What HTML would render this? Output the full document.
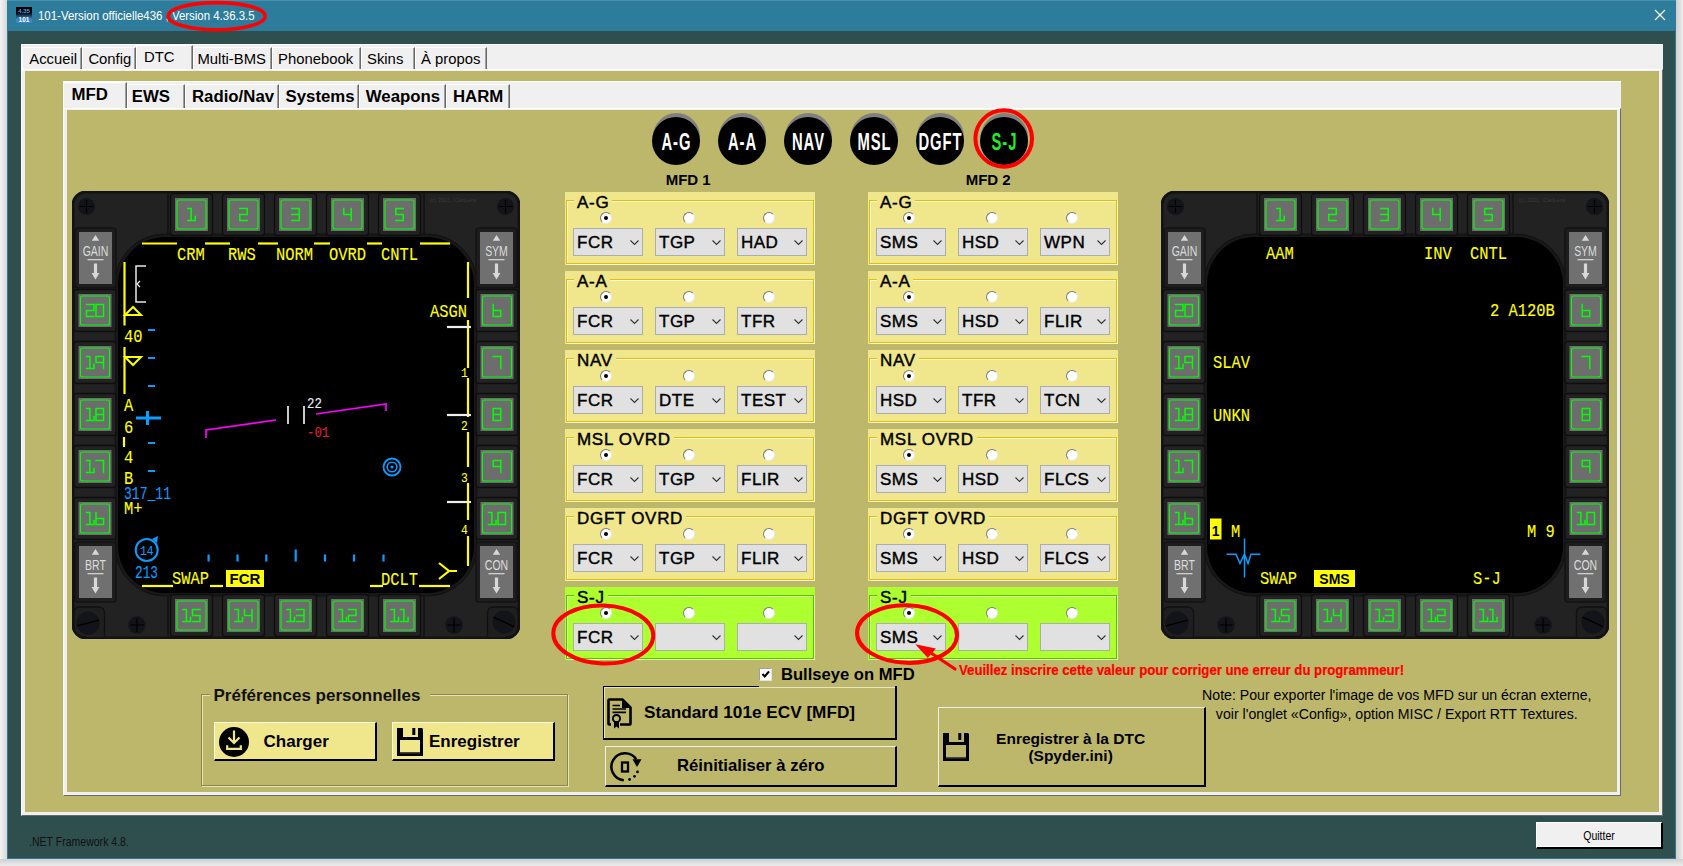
<!DOCTYPE html>
<html><head><meta charset="utf-8">
<style>
*{box-sizing:border-box}
html,body{margin:0;padding:0}
body{width:1683px;height:866px;overflow:hidden;position:relative;background:#e6e6e6;font-family:"Liberation Sans",sans-serif;color:#000}
.abs{position:absolute}
.gb{position:absolute;width:250px;height:73px}
.gbl{position:absolute;left:1px;top:8px;width:248px;height:64px;border:1px solid #e0c000;box-shadow:inset 1px 1px 0 rgba(255,255,255,.6),1px 1px 0 rgba(255,255,255,.6)}
.gbt{position:absolute;left:9px;top:2px;padding:0 3px;font-size:17px;line-height:18px;color:#000;white-space:nowrap;letter-spacing:0.7px;-webkit-text-stroke:0.45px #000}
.radio{position:absolute;width:12px;height:12px;border-radius:50%;background:#fff;border:1px solid #e8e8e8;border-top-color:#7a7a7a;border-left-color:#7a7a7a}
.radio.sel::after{content:"";position:absolute;left:3px;top:3px;width:4px;height:4px;border-radius:50%;background:#000}
.combo{position:absolute;width:70px;height:28px;background:#e1e1e1;border:1px solid #adadad;font-size:17px;color:#000}
.combo span{position:absolute;left:3px;top:5px;line-height:18px;letter-spacing:0.5px;-webkit-text-stroke:0.4px #000}
.chev{position:absolute;right:3px;top:11px}
.rb{position:absolute;width:48px;height:52px}
.rbs{position:absolute;left:1px;top:0;width:47px;height:47px;border-radius:50%;background:#808080}
.rbc{position:absolute;left:0;top:4px;width:48px;height:48px;border-radius:50%;background:#000}
.rbt{position:absolute;left:-26px;width:100px;top:17px;text-align:center;font-weight:bold;font-size:23.5px;line-height:24px;transform:scaleX(0.63);letter-spacing:1.5px;text-indent:1.5px}
.btn{position:absolute;background:#f0e68c;border-top:1px solid #fffbe0;border-left:1px solid #fffbe0;border-right:2px solid #000;border-bottom:2px solid #000}
.btn2{position:absolute;background:#bdb76b;border-top:1px solid #eee;border-left:1px solid #eee;border-right:2px solid #000;border-bottom:2px solid #000}
</style></head><body>
<div class="abs" style="left:0;top:0;width:7px;height:866px;background:linear-gradient(90deg,#f4f4f4,#d8d8d8)"></div>
<div class="abs" style="left:1676px;top:0;width:7px;height:866px;background:linear-gradient(90deg,#cfcfcf,#ececec)"></div>
<div class="abs" style="left:0;top:859px;width:1683px;height:7px;background:linear-gradient(#d0d0d0,#ececec)"></div>
<div class="abs" style="left:7px;top:0;width:1669px;height:859px;background:#2e7c9c"></div>
<div class="abs" style="left:7px;top:0;width:1669px;height:1px;background:#4a8fab"></div>
<div class="abs" style="left:8px;top:31px;width:1667px;height:827px;background:#2f4f4f"></div>
<svg class="abs" style="left:16px;top:7px" width="16" height="16"><defs><linearGradient id="ig" x1="0" y1="0" x2="0" y2="1"><stop offset="0" stop-color="#000"/><stop offset="0.35" stop-color="#000"/><stop offset="0.75" stop-color="#3a86c8"/><stop offset="1" stop-color="#3a86c8"/></defs><rect width="16" height="16" fill="url(#ig)"/><text x="8" y="6" font-family="Liberation Sans" font-weight="bold" font-size="6" fill="#4a9ee0" text-anchor="middle">4.35</text><text x="8" y="15" font-family="Liberation Sans" font-weight="bold" font-size="6.5" fill="#fff" text-anchor="middle">101</text></svg>
<div class="abs" style="left:38px;top:9.16px;font-size:12.3px;line-height:14.76px;color:#fff;white-space:nowrap;transform:scaleX(0.93);transform-origin:0 0;">101-Version officielle436 , Version 4.36.3.5</div>
<svg class="abs" style="left:1654px;top:9px" width="12" height="12"><path d="M1 1L11 11M11 1L1 11" stroke="#fff" stroke-width="1.2"/></svg>
<div class="abs" style="left:21px;top:44px;width:1642px;height:26px;background:#f0f0f0;border-top:1px solid #fff;border-left:1px solid #fff"></div><div class="abs" style="left:21px;top:69px;width:1642px;height:747px;background:#f0f0f0;border-top:1px solid #fff;border-left:1px solid #fff;border-right:1px solid #696969;border-bottom:1px solid #696969"></div><div class="abs" style="left:25px;top:71px;width:1634px;height:741px;background:#bdb76b"></div><div class="abs" style="left:22px;top:47px;width:60px;height:22px;background:#f0f0f0;border-top:1px solid #fff;border-left:1px solid #fff;border-right:1px solid #696969;box-shadow:inset -1px 0 0 #a0a0a0"></div><div class="abs" style="left:29.3px;top:50.74px;font-size:14.85px;line-height:17.82px;color:#000;white-space:nowrap;">Accueil</div><div class="abs" style="left:82px;top:47px;width:54px;height:22px;background:#f0f0f0;border-top:1px solid #fff;border-left:1px solid #fff;border-right:1px solid #696969;box-shadow:inset -1px 0 0 #a0a0a0"></div><div class="abs" style="left:88.4px;top:50.74px;font-size:14.85px;line-height:17.82px;color:#000;white-space:nowrap;">Config</div><div class="abs" style="left:136px;top:45px;width:57px;height:24px;background:#f0f0f0;border-top:1px solid #fff;border-left:1px solid #fff;border-right:1px solid #696969;box-shadow:inset -1px 0 0 #a0a0a0"></div><div class="abs" style="left:144px;top:49.14px;font-size:14.85px;line-height:17.82px;color:#000;white-space:nowrap;">DTC</div><div class="abs" style="left:193px;top:47px;width:79px;height:22px;background:#f0f0f0;border-top:1px solid #fff;border-left:1px solid #fff;border-right:1px solid #696969;box-shadow:inset -1px 0 0 #a0a0a0"></div><div class="abs" style="left:197.5px;top:50.74px;font-size:14.85px;line-height:17.82px;color:#000;white-space:nowrap;">Multi-BMS</div><div class="abs" style="left:272px;top:47px;width:89px;height:22px;background:#f0f0f0;border-top:1px solid #fff;border-left:1px solid #fff;border-right:1px solid #696969;box-shadow:inset -1px 0 0 #a0a0a0"></div><div class="abs" style="left:278px;top:50.74px;font-size:14.85px;line-height:17.82px;color:#000;white-space:nowrap;">Phonebook</div><div class="abs" style="left:361px;top:47px;width:54px;height:22px;background:#f0f0f0;border-top:1px solid #fff;border-left:1px solid #fff;border-right:1px solid #696969;box-shadow:inset -1px 0 0 #a0a0a0"></div><div class="abs" style="left:367px;top:50.74px;font-size:14.85px;line-height:17.82px;color:#000;white-space:nowrap;">Skins</div><div class="abs" style="left:415px;top:47px;width:72px;height:22px;background:#f0f0f0;border-top:1px solid #fff;border-left:1px solid #fff;border-right:1px solid #696969;box-shadow:inset -1px 0 0 #a0a0a0"></div><div class="abs" style="left:421px;top:50.74px;font-size:14.85px;line-height:17.82px;color:#000;white-space:nowrap;">À propos</div>
<div class="abs" style="left:63px;top:81px;width:1558px;height:28px;background:#f0f0f0;border-top:1px solid #fff;border-left:1px solid #fff"></div><div class="abs" style="left:63px;top:108px;width:1558px;height:688px;background:#f0f0f0;border-top:1px solid #fff;border-left:1px solid #fff;border-right:1px solid #696969;border-bottom:1px solid #696969"></div><div class="abs" style="left:67px;top:110px;width:1550px;height:682px;background:#bdb76b"></div><div class="abs" style="left:63px;top:82px;width:64px;height:26px;background:#f0f0f0;border-top:1px solid #fff;border-left:1px solid #fff;border-right:1px solid #696969;box-shadow:inset -1px 0 0 #a0a0a0"></div><div class="abs" style="left:71.6px;top:84.70px;font-size:16.8px;line-height:20.16px;color:#000;white-space:nowrap;font-weight:bold;">MFD</div><div class="abs" style="left:127px;top:84px;width:58px;height:24px;background:#f0f0f0;border-top:1px solid #fff;border-left:1px solid #fff;border-right:1px solid #696969;box-shadow:inset -1px 0 0 #a0a0a0"></div><div class="abs" style="left:131.8px;top:86.60px;font-size:16.8px;line-height:20.16px;color:#000;white-space:nowrap;font-weight:bold;">EWS</div><div class="abs" style="left:185px;top:84px;width:94px;height:24px;background:#f0f0f0;border-top:1px solid #fff;border-left:1px solid #fff;border-right:1px solid #696969;box-shadow:inset -1px 0 0 #a0a0a0"></div><div class="abs" style="left:192px;top:86.60px;font-size:16.8px;line-height:20.16px;color:#000;white-space:nowrap;font-weight:bold;">Radio/Nav</div><div class="abs" style="left:279px;top:84px;width:80px;height:24px;background:#f0f0f0;border-top:1px solid #fff;border-left:1px solid #fff;border-right:1px solid #696969;box-shadow:inset -1px 0 0 #a0a0a0"></div><div class="abs" style="left:285.6px;top:86.60px;font-size:16.8px;line-height:20.16px;color:#000;white-space:nowrap;font-weight:bold;">Systems</div><div class="abs" style="left:359px;top:84px;width:87px;height:24px;background:#f0f0f0;border-top:1px solid #fff;border-left:1px solid #fff;border-right:1px solid #696969;box-shadow:inset -1px 0 0 #a0a0a0"></div><div class="abs" style="left:365.8px;top:86.60px;font-size:16.8px;line-height:20.16px;color:#000;white-space:nowrap;font-weight:bold;">Weapons</div><div class="abs" style="left:446px;top:84px;width:64px;height:24px;background:#f0f0f0;border-top:1px solid #fff;border-left:1px solid #fff;border-right:1px solid #696969;box-shadow:inset -1px 0 0 #a0a0a0"></div><div class="abs" style="left:453px;top:86.60px;font-size:16.8px;line-height:20.16px;color:#000;white-space:nowrap;font-weight:bold;">HARM</div>
<div class="rb" style="left:652px;top:113px"><div class="rbs"></div><div class="rbc"></div><div class="rbt" style="color:#fff">A-G</div></div><div class="rb" style="left:718px;top:113px"><div class="rbs"></div><div class="rbc"></div><div class="rbt" style="color:#fff">A-A</div></div><div class="rb" style="left:783.5px;top:113px"><div class="rbs"></div><div class="rbc"></div><div class="rbt" style="color:#fff">NAV</div></div><div class="rb" style="left:850px;top:113px"><div class="rbs"></div><div class="rbc"></div><div class="rbt" style="color:#fff">MSL</div></div><div class="rb" style="left:916px;top:113px"><div class="rbs"></div><div class="rbc"></div><div class="rbt" style="color:#fff">DGFT</div></div><div class="rb" style="left:979.7px;top:113px"><div class="rbs"></div><div class="rbc"></div><div class="rbt" style="color:#22ee22">S-J</div></div>
<div class="gb" style="left:565px;top:192px;background:#f0e68c"><div class="gbl" style="border-color:#e0c000"></div><div class="gbt" style="background:#f0e68c">A-G</div><div class="radio sel" style="left:35px;top:20px"></div><div class="combo" style="left:8px;top:36px"><span>FCR</span><svg class="chev" width="9" height="6" viewBox="0 0 9 6"><path d="M0.5 0.5L4.5 4.5L8.5 0.5" stroke="#333" stroke-width="1.1" fill="none"/></svg></div><div class="radio" style="left:118px;top:20px"></div><div class="combo" style="left:90px;top:36px"><span>TGP</span><svg class="chev" width="9" height="6" viewBox="0 0 9 6"><path d="M0.5 0.5L4.5 4.5L8.5 0.5" stroke="#333" stroke-width="1.1" fill="none"/></svg></div><div class="radio" style="left:198px;top:20px"></div><div class="combo" style="left:172px;top:36px"><span>HAD</span><svg class="chev" width="9" height="6" viewBox="0 0 9 6"><path d="M0.5 0.5L4.5 4.5L8.5 0.5" stroke="#333" stroke-width="1.1" fill="none"/></svg></div></div><div class="gb" style="left:565px;top:271px;background:#f0e68c"><div class="gbl" style="border-color:#e0c000"></div><div class="gbt" style="background:#f0e68c">A-A</div><div class="radio sel" style="left:35px;top:20px"></div><div class="combo" style="left:8px;top:36px"><span>FCR</span><svg class="chev" width="9" height="6" viewBox="0 0 9 6"><path d="M0.5 0.5L4.5 4.5L8.5 0.5" stroke="#333" stroke-width="1.1" fill="none"/></svg></div><div class="radio" style="left:118px;top:20px"></div><div class="combo" style="left:90px;top:36px"><span>TGP</span><svg class="chev" width="9" height="6" viewBox="0 0 9 6"><path d="M0.5 0.5L4.5 4.5L8.5 0.5" stroke="#333" stroke-width="1.1" fill="none"/></svg></div><div class="radio" style="left:198px;top:20px"></div><div class="combo" style="left:172px;top:36px"><span>TFR</span><svg class="chev" width="9" height="6" viewBox="0 0 9 6"><path d="M0.5 0.5L4.5 4.5L8.5 0.5" stroke="#333" stroke-width="1.1" fill="none"/></svg></div></div><div class="gb" style="left:565px;top:350px;background:#f0e68c"><div class="gbl" style="border-color:#e0c000"></div><div class="gbt" style="background:#f0e68c">NAV</div><div class="radio sel" style="left:35px;top:20px"></div><div class="combo" style="left:8px;top:36px"><span>FCR</span><svg class="chev" width="9" height="6" viewBox="0 0 9 6"><path d="M0.5 0.5L4.5 4.5L8.5 0.5" stroke="#333" stroke-width="1.1" fill="none"/></svg></div><div class="radio" style="left:118px;top:20px"></div><div class="combo" style="left:90px;top:36px"><span>DTE</span><svg class="chev" width="9" height="6" viewBox="0 0 9 6"><path d="M0.5 0.5L4.5 4.5L8.5 0.5" stroke="#333" stroke-width="1.1" fill="none"/></svg></div><div class="radio" style="left:198px;top:20px"></div><div class="combo" style="left:172px;top:36px"><span>TEST</span><svg class="chev" width="9" height="6" viewBox="0 0 9 6"><path d="M0.5 0.5L4.5 4.5L8.5 0.5" stroke="#333" stroke-width="1.1" fill="none"/></svg></div></div><div class="gb" style="left:565px;top:429px;background:#f0e68c"><div class="gbl" style="border-color:#e0c000"></div><div class="gbt" style="background:#f0e68c">MSL OVRD</div><div class="radio sel" style="left:35px;top:20px"></div><div class="combo" style="left:8px;top:36px"><span>FCR</span><svg class="chev" width="9" height="6" viewBox="0 0 9 6"><path d="M0.5 0.5L4.5 4.5L8.5 0.5" stroke="#333" stroke-width="1.1" fill="none"/></svg></div><div class="radio" style="left:118px;top:20px"></div><div class="combo" style="left:90px;top:36px"><span>TGP</span><svg class="chev" width="9" height="6" viewBox="0 0 9 6"><path d="M0.5 0.5L4.5 4.5L8.5 0.5" stroke="#333" stroke-width="1.1" fill="none"/></svg></div><div class="radio" style="left:198px;top:20px"></div><div class="combo" style="left:172px;top:36px"><span>FLIR</span><svg class="chev" width="9" height="6" viewBox="0 0 9 6"><path d="M0.5 0.5L4.5 4.5L8.5 0.5" stroke="#333" stroke-width="1.1" fill="none"/></svg></div></div><div class="gb" style="left:565px;top:508px;background:#f0e68c"><div class="gbl" style="border-color:#e0c000"></div><div class="gbt" style="background:#f0e68c">DGFT OVRD</div><div class="radio sel" style="left:35px;top:20px"></div><div class="combo" style="left:8px;top:36px"><span>FCR</span><svg class="chev" width="9" height="6" viewBox="0 0 9 6"><path d="M0.5 0.5L4.5 4.5L8.5 0.5" stroke="#333" stroke-width="1.1" fill="none"/></svg></div><div class="radio" style="left:118px;top:20px"></div><div class="combo" style="left:90px;top:36px"><span>TGP</span><svg class="chev" width="9" height="6" viewBox="0 0 9 6"><path d="M0.5 0.5L4.5 4.5L8.5 0.5" stroke="#333" stroke-width="1.1" fill="none"/></svg></div><div class="radio" style="left:198px;top:20px"></div><div class="combo" style="left:172px;top:36px"><span>FLIR</span><svg class="chev" width="9" height="6" viewBox="0 0 9 6"><path d="M0.5 0.5L4.5 4.5L8.5 0.5" stroke="#333" stroke-width="1.1" fill="none"/></svg></div></div><div class="gb" style="left:565px;top:587px;background:#adff2f"><div class="gbl" style="border-color:#5cc000"></div><div class="gbt" style="background:#adff2f">S-J</div><div class="radio sel" style="left:35px;top:20px"></div><div class="combo" style="left:8px;top:36px"><span>FCR</span><svg class="chev" width="9" height="6" viewBox="0 0 9 6"><path d="M0.5 0.5L4.5 4.5L8.5 0.5" stroke="#333" stroke-width="1.1" fill="none"/></svg></div><div class="radio" style="left:118px;top:20px"></div><div class="combo" style="left:90px;top:36px"><span></span><svg class="chev" width="9" height="6" viewBox="0 0 9 6"><path d="M0.5 0.5L4.5 4.5L8.5 0.5" stroke="#333" stroke-width="1.1" fill="none"/></svg></div><div class="radio" style="left:198px;top:20px"></div><div class="combo" style="left:172px;top:36px"><span></span><svg class="chev" width="9" height="6" viewBox="0 0 9 6"><path d="M0.5 0.5L4.5 4.5L8.5 0.5" stroke="#333" stroke-width="1.1" fill="none"/></svg></div></div><div class="gb" style="left:868px;top:192px;background:#f0e68c"><div class="gbl" style="border-color:#e0c000"></div><div class="gbt" style="background:#f0e68c">A-G</div><div class="radio sel" style="left:35px;top:20px"></div><div class="combo" style="left:8px;top:36px"><span>SMS</span><svg class="chev" width="9" height="6" viewBox="0 0 9 6"><path d="M0.5 0.5L4.5 4.5L8.5 0.5" stroke="#333" stroke-width="1.1" fill="none"/></svg></div><div class="radio" style="left:118px;top:20px"></div><div class="combo" style="left:90px;top:36px"><span>HSD</span><svg class="chev" width="9" height="6" viewBox="0 0 9 6"><path d="M0.5 0.5L4.5 4.5L8.5 0.5" stroke="#333" stroke-width="1.1" fill="none"/></svg></div><div class="radio" style="left:198px;top:20px"></div><div class="combo" style="left:172px;top:36px"><span>WPN</span><svg class="chev" width="9" height="6" viewBox="0 0 9 6"><path d="M0.5 0.5L4.5 4.5L8.5 0.5" stroke="#333" stroke-width="1.1" fill="none"/></svg></div></div><div class="gb" style="left:868px;top:271px;background:#f0e68c"><div class="gbl" style="border-color:#e0c000"></div><div class="gbt" style="background:#f0e68c">A-A</div><div class="radio sel" style="left:35px;top:20px"></div><div class="combo" style="left:8px;top:36px"><span>SMS</span><svg class="chev" width="9" height="6" viewBox="0 0 9 6"><path d="M0.5 0.5L4.5 4.5L8.5 0.5" stroke="#333" stroke-width="1.1" fill="none"/></svg></div><div class="radio" style="left:118px;top:20px"></div><div class="combo" style="left:90px;top:36px"><span>HSD</span><svg class="chev" width="9" height="6" viewBox="0 0 9 6"><path d="M0.5 0.5L4.5 4.5L8.5 0.5" stroke="#333" stroke-width="1.1" fill="none"/></svg></div><div class="radio" style="left:198px;top:20px"></div><div class="combo" style="left:172px;top:36px"><span>FLIR</span><svg class="chev" width="9" height="6" viewBox="0 0 9 6"><path d="M0.5 0.5L4.5 4.5L8.5 0.5" stroke="#333" stroke-width="1.1" fill="none"/></svg></div></div><div class="gb" style="left:868px;top:350px;background:#f0e68c"><div class="gbl" style="border-color:#e0c000"></div><div class="gbt" style="background:#f0e68c">NAV</div><div class="radio sel" style="left:35px;top:20px"></div><div class="combo" style="left:8px;top:36px"><span>HSD</span><svg class="chev" width="9" height="6" viewBox="0 0 9 6"><path d="M0.5 0.5L4.5 4.5L8.5 0.5" stroke="#333" stroke-width="1.1" fill="none"/></svg></div><div class="radio" style="left:118px;top:20px"></div><div class="combo" style="left:90px;top:36px"><span>TFR</span><svg class="chev" width="9" height="6" viewBox="0 0 9 6"><path d="M0.5 0.5L4.5 4.5L8.5 0.5" stroke="#333" stroke-width="1.1" fill="none"/></svg></div><div class="radio" style="left:198px;top:20px"></div><div class="combo" style="left:172px;top:36px"><span>TCN</span><svg class="chev" width="9" height="6" viewBox="0 0 9 6"><path d="M0.5 0.5L4.5 4.5L8.5 0.5" stroke="#333" stroke-width="1.1" fill="none"/></svg></div></div><div class="gb" style="left:868px;top:429px;background:#f0e68c"><div class="gbl" style="border-color:#e0c000"></div><div class="gbt" style="background:#f0e68c">MSL OVRD</div><div class="radio sel" style="left:35px;top:20px"></div><div class="combo" style="left:8px;top:36px"><span>SMS</span><svg class="chev" width="9" height="6" viewBox="0 0 9 6"><path d="M0.5 0.5L4.5 4.5L8.5 0.5" stroke="#333" stroke-width="1.1" fill="none"/></svg></div><div class="radio" style="left:118px;top:20px"></div><div class="combo" style="left:90px;top:36px"><span>HSD</span><svg class="chev" width="9" height="6" viewBox="0 0 9 6"><path d="M0.5 0.5L4.5 4.5L8.5 0.5" stroke="#333" stroke-width="1.1" fill="none"/></svg></div><div class="radio" style="left:198px;top:20px"></div><div class="combo" style="left:172px;top:36px"><span>FLCS</span><svg class="chev" width="9" height="6" viewBox="0 0 9 6"><path d="M0.5 0.5L4.5 4.5L8.5 0.5" stroke="#333" stroke-width="1.1" fill="none"/></svg></div></div><div class="gb" style="left:868px;top:508px;background:#f0e68c"><div class="gbl" style="border-color:#e0c000"></div><div class="gbt" style="background:#f0e68c">DGFT OVRD</div><div class="radio sel" style="left:35px;top:20px"></div><div class="combo" style="left:8px;top:36px"><span>SMS</span><svg class="chev" width="9" height="6" viewBox="0 0 9 6"><path d="M0.5 0.5L4.5 4.5L8.5 0.5" stroke="#333" stroke-width="1.1" fill="none"/></svg></div><div class="radio" style="left:118px;top:20px"></div><div class="combo" style="left:90px;top:36px"><span>HSD</span><svg class="chev" width="9" height="6" viewBox="0 0 9 6"><path d="M0.5 0.5L4.5 4.5L8.5 0.5" stroke="#333" stroke-width="1.1" fill="none"/></svg></div><div class="radio" style="left:198px;top:20px"></div><div class="combo" style="left:172px;top:36px"><span>FLCS</span><svg class="chev" width="9" height="6" viewBox="0 0 9 6"><path d="M0.5 0.5L4.5 4.5L8.5 0.5" stroke="#333" stroke-width="1.1" fill="none"/></svg></div></div><div class="gb" style="left:868px;top:587px;background:#adff2f"><div class="gbl" style="border-color:#5cc000"></div><div class="gbt" style="background:#adff2f">S-J</div><div class="radio sel" style="left:35px;top:20px"></div><div class="combo" style="left:8px;top:36px"><span>SMS</span><svg class="chev" width="9" height="6" viewBox="0 0 9 6"><path d="M0.5 0.5L4.5 4.5L8.5 0.5" stroke="#333" stroke-width="1.1" fill="none"/></svg></div><div class="radio" style="left:118px;top:20px"></div><div class="combo" style="left:90px;top:36px"><span></span><svg class="chev" width="9" height="6" viewBox="0 0 9 6"><path d="M0.5 0.5L4.5 4.5L8.5 0.5" stroke="#333" stroke-width="1.1" fill="none"/></svg></div><div class="radio" style="left:198px;top:20px"></div><div class="combo" style="left:172px;top:36px"><span></span><svg class="chev" width="9" height="6" viewBox="0 0 9 6"><path d="M0.5 0.5L4.5 4.5L8.5 0.5" stroke="#333" stroke-width="1.1" fill="none"/></svg></div></div>
<svg class="abs" style="left:72px;top:191px" width="448" height="448" viewBox="0 0 448 448"><defs><g id="bez"><rect x="1" y="1" width="446" height="446" rx="13" fill="#222" stroke="#121212" stroke-width="3"/><rect x="43" y="43" width="362" height="362" rx="50" fill="#181818" stroke="#101010" stroke-width="1"/><rect x="46" y="46" width="356" height="356" rx="47" fill="#000"/><path d="M96 2V44M352 2V44M96 404V446M352 404V446M2 96H44M2 352H44M404 96H446M404 352H446" stroke="#121212" stroke-width="1.5"/><rect x="98.5" y="2.5" width="42" height="42" rx="3" fill="#222" stroke="#0e0e0e" stroke-width="1.3"/><rect x="103.0" y="7.0" width="33" height="33" fill="#6d6d6d"/><rect x="105.0" y="9.0" width="29" height="29" rx="2" fill="none" stroke="#00ff00" stroke-width="1.1"/><path d="M115.8 17.5L119.1 17.5M119.1 17.5L119.1 29.5M115.8 29.5L123.2 29.5M123.2 29.5L123.2 25.5" stroke="#00ff00" stroke-width="1.5" fill="none" stroke-linecap="square"/><rect x="98.5" y="403.5" width="42" height="42" rx="3" fill="#222" stroke="#0e0e0e" stroke-width="1.3"/><rect x="103.0" y="408.0" width="33" height="33" fill="#6d6d6d"/><rect x="105.0" y="410.0" width="29" height="29" rx="2" fill="none" stroke="#00ff00" stroke-width="1.1"/><path d="M111.0 418.5L114.4 418.5M114.4 418.5L114.4 430.5M111.0 430.5L118.5 430.5M118.5 430.5L118.5 426.5" stroke="#00ff00" stroke-width="1.5" fill="none" stroke-linecap="square"/><path d="M120.5 418.5L128.0 418.5M120.5 418.5L120.5 424.5M120.5 424.5L128.0 424.5M128.0 424.5L128.0 430.5M120.5 430.5L128.0 430.5" stroke="#00ff00" stroke-width="1.5" fill="none" stroke-linecap="square"/><rect x="150.5" y="2.5" width="42" height="42" rx="3" fill="#222" stroke="#0e0e0e" stroke-width="1.3"/><rect x="155.0" y="7.0" width="33" height="33" fill="#6d6d6d"/><rect x="157.0" y="9.0" width="29" height="29" rx="2" fill="none" stroke="#00ff00" stroke-width="1.1"/><path d="M167.8 17.5L175.2 17.5M175.2 17.5L175.2 23.5M167.8 23.5L175.2 23.5M167.8 23.5L167.8 29.5M167.8 29.5L175.2 29.5" stroke="#00ff00" stroke-width="1.5" fill="none" stroke-linecap="square"/><rect x="150.5" y="403.5" width="42" height="42" rx="3" fill="#222" stroke="#0e0e0e" stroke-width="1.3"/><rect x="155.0" y="408.0" width="33" height="33" fill="#6d6d6d"/><rect x="157.0" y="410.0" width="29" height="29" rx="2" fill="none" stroke="#00ff00" stroke-width="1.1"/><path d="M163.0 418.5L166.4 418.5M166.4 418.5L166.4 430.5M163.0 430.5L170.5 430.5M170.5 430.5L170.5 426.5" stroke="#00ff00" stroke-width="1.5" fill="none" stroke-linecap="square"/><path d="M172.5 418.5L172.5 424.5M172.5 424.5L180.0 424.5M180.0 418.5L180.0 424.5M180.0 424.5L180.0 430.5" stroke="#00ff00" stroke-width="1.5" fill="none" stroke-linecap="square"/><rect x="202.5" y="2.5" width="42" height="42" rx="3" fill="#222" stroke="#0e0e0e" stroke-width="1.3"/><rect x="207.0" y="7.0" width="33" height="33" fill="#6d6d6d"/><rect x="209.0" y="9.0" width="29" height="29" rx="2" fill="none" stroke="#00ff00" stroke-width="1.1"/><path d="M219.8 17.5L227.2 17.5M227.2 17.5L227.2 23.5M227.2 23.5L227.2 29.5M219.8 23.5L227.2 23.5M219.8 29.5L227.2 29.5" stroke="#00ff00" stroke-width="1.5" fill="none" stroke-linecap="square"/><rect x="202.5" y="403.5" width="42" height="42" rx="3" fill="#222" stroke="#0e0e0e" stroke-width="1.3"/><rect x="207.0" y="408.0" width="33" height="33" fill="#6d6d6d"/><rect x="209.0" y="410.0" width="29" height="29" rx="2" fill="none" stroke="#00ff00" stroke-width="1.1"/><path d="M215.0 418.5L218.4 418.5M218.4 418.5L218.4 430.5M215.0 430.5L222.5 430.5M222.5 430.5L222.5 426.5" stroke="#00ff00" stroke-width="1.5" fill="none" stroke-linecap="square"/><path d="M224.5 418.5L232.0 418.5M232.0 418.5L232.0 424.5M232.0 424.5L232.0 430.5M224.5 424.5L232.0 424.5M224.5 430.5L232.0 430.5" stroke="#00ff00" stroke-width="1.5" fill="none" stroke-linecap="square"/><rect x="254.5" y="2.5" width="42" height="42" rx="3" fill="#222" stroke="#0e0e0e" stroke-width="1.3"/><rect x="259.0" y="7.0" width="33" height="33" fill="#6d6d6d"/><rect x="261.0" y="9.0" width="29" height="29" rx="2" fill="none" stroke="#00ff00" stroke-width="1.1"/><path d="M271.8 17.5L271.8 23.5M271.8 23.5L279.2 23.5M279.2 17.5L279.2 23.5M279.2 23.5L279.2 29.5" stroke="#00ff00" stroke-width="1.5" fill="none" stroke-linecap="square"/><rect x="254.5" y="403.5" width="42" height="42" rx="3" fill="#222" stroke="#0e0e0e" stroke-width="1.3"/><rect x="259.0" y="408.0" width="33" height="33" fill="#6d6d6d"/><rect x="261.0" y="410.0" width="29" height="29" rx="2" fill="none" stroke="#00ff00" stroke-width="1.1"/><path d="M267.0 418.5L270.4 418.5M270.4 418.5L270.4 430.5M267.0 430.5L274.5 430.5M274.5 430.5L274.5 426.5" stroke="#00ff00" stroke-width="1.5" fill="none" stroke-linecap="square"/><path d="M276.5 418.5L284.0 418.5M284.0 418.5L284.0 424.5M276.5 424.5L284.0 424.5M276.5 424.5L276.5 430.5M276.5 430.5L284.0 430.5" stroke="#00ff00" stroke-width="1.5" fill="none" stroke-linecap="square"/><rect x="306.5" y="2.5" width="42" height="42" rx="3" fill="#222" stroke="#0e0e0e" stroke-width="1.3"/><rect x="311.0" y="7.0" width="33" height="33" fill="#6d6d6d"/><rect x="313.0" y="9.0" width="29" height="29" rx="2" fill="none" stroke="#00ff00" stroke-width="1.1"/><path d="M323.8 17.5L331.2 17.5M323.8 17.5L323.8 23.5M323.8 23.5L331.2 23.5M331.2 23.5L331.2 29.5M323.8 29.5L331.2 29.5" stroke="#00ff00" stroke-width="1.5" fill="none" stroke-linecap="square"/><rect x="306.5" y="403.5" width="42" height="42" rx="3" fill="#222" stroke="#0e0e0e" stroke-width="1.3"/><rect x="311.0" y="408.0" width="33" height="33" fill="#6d6d6d"/><rect x="313.0" y="410.0" width="29" height="29" rx="2" fill="none" stroke="#00ff00" stroke-width="1.1"/><path d="M319.0 418.5L322.4 418.5M322.4 418.5L322.4 430.5M319.0 430.5L326.5 430.5M326.5 430.5L326.5 426.5" stroke="#00ff00" stroke-width="1.5" fill="none" stroke-linecap="square"/><path d="M328.5 418.5L331.9 418.5M331.9 418.5L331.9 430.5M328.5 430.5L336.0 430.5M336.0 430.5L336.0 426.5" stroke="#00ff00" stroke-width="1.5" fill="none" stroke-linecap="square"/><rect x="2" y="98.5" width="42" height="42" rx="3" fill="#222" stroke="#0e0e0e" stroke-width="1.3"/><rect x="6.5" y="103.0" width="33" height="33" fill="#6d6d6d"/><rect x="8.5" y="105.0" width="29" height="29" rx="2" fill="none" stroke="#00ff00" stroke-width="1.1"/><path d="M14.5 113.5L22.0 113.5M22.0 113.5L22.0 119.5M14.5 119.5L22.0 119.5M14.5 119.5L14.5 125.5M14.5 125.5L22.0 125.5" stroke="#00ff00" stroke-width="1.5" fill="none" stroke-linecap="square"/><path d="M24.0 113.5L31.5 113.5M31.5 113.5L31.5 119.5M31.5 119.5L31.5 125.5M24.0 125.5L31.5 125.5M24.0 119.5L24.0 125.5M24.0 113.5L24.0 119.5" stroke="#00ff00" stroke-width="1.5" fill="none" stroke-linecap="square"/><rect x="404" y="98.5" width="42" height="42" rx="3" fill="#222" stroke="#0e0e0e" stroke-width="1.3"/><rect x="408.5" y="103.0" width="33" height="33" fill="#6d6d6d"/><rect x="410.5" y="105.0" width="29" height="29" rx="2" fill="none" stroke="#00ff00" stroke-width="1.1"/><path d="M421.2 113.5L421.2 119.5M421.2 119.5L421.2 125.5M421.2 125.5L428.8 125.5M428.8 119.5L428.8 125.5M421.2 119.5L428.8 119.5" stroke="#00ff00" stroke-width="1.5" fill="none" stroke-linecap="square"/><rect x="2" y="150.5" width="42" height="42" rx="3" fill="#222" stroke="#0e0e0e" stroke-width="1.3"/><rect x="6.5" y="155.0" width="33" height="33" fill="#6d6d6d"/><rect x="8.5" y="157.0" width="29" height="29" rx="2" fill="none" stroke="#00ff00" stroke-width="1.1"/><path d="M14.5 165.5L17.9 165.5M17.9 165.5L17.9 177.5M14.5 177.5L22.0 177.5M22.0 177.5L22.0 173.5" stroke="#00ff00" stroke-width="1.5" fill="none" stroke-linecap="square"/><path d="M24.0 165.5L31.5 165.5M24.0 165.5L24.0 171.5M24.0 171.5L31.5 171.5M31.5 165.5L31.5 171.5M31.5 171.5L31.5 177.5" stroke="#00ff00" stroke-width="1.5" fill="none" stroke-linecap="square"/><rect x="404" y="150.5" width="42" height="42" rx="3" fill="#222" stroke="#0e0e0e" stroke-width="1.3"/><rect x="408.5" y="155.0" width="33" height="33" fill="#6d6d6d"/><rect x="410.5" y="157.0" width="29" height="29" rx="2" fill="none" stroke="#00ff00" stroke-width="1.1"/><path d="M421.2 165.5L428.8 165.5M428.8 165.5L428.8 171.5M428.8 171.5L428.8 177.5" stroke="#00ff00" stroke-width="1.5" fill="none" stroke-linecap="square"/><rect x="2" y="202.5" width="42" height="42" rx="3" fill="#222" stroke="#0e0e0e" stroke-width="1.3"/><rect x="6.5" y="207.0" width="33" height="33" fill="#6d6d6d"/><rect x="8.5" y="209.0" width="29" height="29" rx="2" fill="none" stroke="#00ff00" stroke-width="1.1"/><path d="M14.5 217.5L17.9 217.5M17.9 217.5L17.9 229.5M14.5 229.5L22.0 229.5M22.0 229.5L22.0 225.5" stroke="#00ff00" stroke-width="1.5" fill="none" stroke-linecap="square"/><path d="M24.0 217.5L31.5 217.5M31.5 217.5L31.5 223.5M31.5 223.5L31.5 229.5M24.0 229.5L31.5 229.5M24.0 223.5L24.0 229.5M24.0 217.5L24.0 223.5M24.0 223.5L31.5 223.5" stroke="#00ff00" stroke-width="1.5" fill="none" stroke-linecap="square"/><rect x="404" y="202.5" width="42" height="42" rx="3" fill="#222" stroke="#0e0e0e" stroke-width="1.3"/><rect x="408.5" y="207.0" width="33" height="33" fill="#6d6d6d"/><rect x="410.5" y="209.0" width="29" height="29" rx="2" fill="none" stroke="#00ff00" stroke-width="1.1"/><path d="M421.2 217.5L428.8 217.5M428.8 217.5L428.8 223.5M428.8 223.5L428.8 229.5M421.2 229.5L428.8 229.5M421.2 223.5L421.2 229.5M421.2 217.5L421.2 223.5M421.2 223.5L428.8 223.5" stroke="#00ff00" stroke-width="1.5" fill="none" stroke-linecap="square"/><rect x="2" y="254.5" width="42" height="42" rx="3" fill="#222" stroke="#0e0e0e" stroke-width="1.3"/><rect x="6.5" y="259.0" width="33" height="33" fill="#6d6d6d"/><rect x="8.5" y="261.0" width="29" height="29" rx="2" fill="none" stroke="#00ff00" stroke-width="1.1"/><path d="M14.5 269.5L17.9 269.5M17.9 269.5L17.9 281.5M14.5 281.5L22.0 281.5M22.0 281.5L22.0 277.5" stroke="#00ff00" stroke-width="1.5" fill="none" stroke-linecap="square"/><path d="M24.0 269.5L31.5 269.5M31.5 269.5L31.5 275.5M31.5 275.5L31.5 281.5" stroke="#00ff00" stroke-width="1.5" fill="none" stroke-linecap="square"/><rect x="404" y="254.5" width="42" height="42" rx="3" fill="#222" stroke="#0e0e0e" stroke-width="1.3"/><rect x="408.5" y="259.0" width="33" height="33" fill="#6d6d6d"/><rect x="410.5" y="261.0" width="29" height="29" rx="2" fill="none" stroke="#00ff00" stroke-width="1.1"/><path d="M421.2 269.5L428.8 269.5M421.2 269.5L421.2 275.5M421.2 275.5L428.8 275.5M428.8 269.5L428.8 275.5M428.8 275.5L428.8 281.5" stroke="#00ff00" stroke-width="1.5" fill="none" stroke-linecap="square"/><rect x="2" y="306.5" width="42" height="42" rx="3" fill="#222" stroke="#0e0e0e" stroke-width="1.3"/><rect x="6.5" y="311.0" width="33" height="33" fill="#6d6d6d"/><rect x="8.5" y="313.0" width="29" height="29" rx="2" fill="none" stroke="#00ff00" stroke-width="1.1"/><path d="M14.5 321.5L17.9 321.5M17.9 321.5L17.9 333.5M14.5 333.5L22.0 333.5M22.0 333.5L22.0 329.5" stroke="#00ff00" stroke-width="1.5" fill="none" stroke-linecap="square"/><path d="M24.0 321.5L24.0 327.5M24.0 327.5L24.0 333.5M24.0 333.5L31.5 333.5M31.5 327.5L31.5 333.5M24.0 327.5L31.5 327.5" stroke="#00ff00" stroke-width="1.5" fill="none" stroke-linecap="square"/><rect x="404" y="306.5" width="42" height="42" rx="3" fill="#222" stroke="#0e0e0e" stroke-width="1.3"/><rect x="408.5" y="311.0" width="33" height="33" fill="#6d6d6d"/><rect x="410.5" y="313.0" width="29" height="29" rx="2" fill="none" stroke="#00ff00" stroke-width="1.1"/><path d="M416.5 321.5L419.9 321.5M419.9 321.5L419.9 333.5M416.5 333.5L424.0 333.5M424.0 333.5L424.0 329.5" stroke="#00ff00" stroke-width="1.5" fill="none" stroke-linecap="square"/><path d="M426.0 321.5L433.5 321.5M433.5 321.5L433.5 327.5M433.5 327.5L433.5 333.5M426.0 333.5L433.5 333.5M426.0 327.5L426.0 333.5M426.0 321.5L426.0 327.5" stroke="#00ff00" stroke-width="1.5" fill="none" stroke-linecap="square"/><rect x="3" y="37" width="41" height="60" rx="3" fill="#1d1d1d" stroke="#131313" stroke-width="1.5"/><rect x="7" y="41" width="33" height="52" fill="#707070"/><path d="M19.8 49.8L23.5 44L27.2 49.8Z" fill="#d8d8d8"/><text x="23.5" y="65" font-family="Liberation Sans" font-size="15" fill="#dcdcdc" text-anchor="middle" transform="translate(23.5 0) scale(0.7 1) translate(-23.5 0)">GAIN</text><rect x="15.5" y="68" width="16" height="1.3" fill="#d0d0d0"/><path d="M21.9 72.5h3.2v9.5h2.3l-3.9 6.5l-3.9 -6.5h2.3z" fill="#d8d8d8"/><rect x="404" y="37" width="41" height="60" rx="3" fill="#1d1d1d" stroke="#131313" stroke-width="1.5"/><rect x="408" y="41" width="33" height="52" fill="#707070"/><path d="M420.8 49.8L424.5 44L428.2 49.8Z" fill="#d8d8d8"/><text x="424.5" y="65" font-family="Liberation Sans" font-size="15" fill="#dcdcdc" text-anchor="middle" transform="translate(424.5 0) scale(0.7 1) translate(-424.5 0)">SYM</text><rect x="416.5" y="68" width="16" height="1.3" fill="#d0d0d0"/><path d="M422.9 72.5h3.2v9.5h2.3l-3.9 6.5l-3.9 -6.5h2.3z" fill="#d8d8d8"/><rect x="3" y="351" width="41" height="60" rx="3" fill="#1d1d1d" stroke="#131313" stroke-width="1.5"/><rect x="7" y="355" width="33" height="52" fill="#707070"/><path d="M19.8 363.8L23.5 358L27.2 363.8Z" fill="#d8d8d8"/><text x="23.5" y="379" font-family="Liberation Sans" font-size="15" fill="#dcdcdc" text-anchor="middle" transform="translate(23.5 0) scale(0.7 1) translate(-23.5 0)">BRT</text><rect x="15.5" y="382" width="16" height="1.3" fill="#d0d0d0"/><path d="M21.9 386.5h3.2v9.5h2.3l-3.9 6.5l-3.9 -6.5h2.3z" fill="#d8d8d8"/><rect x="404" y="351" width="41" height="60" rx="3" fill="#1d1d1d" stroke="#131313" stroke-width="1.5"/><rect x="408" y="355" width="33" height="52" fill="#707070"/><path d="M420.8 363.8L424.5 358L428.2 363.8Z" fill="#d8d8d8"/><text x="424.5" y="379" font-family="Liberation Sans" font-size="15" fill="#dcdcdc" text-anchor="middle" transform="translate(424.5 0) scale(0.7 1) translate(-424.5 0)">CON</text><rect x="416.5" y="382" width="16" height="1.3" fill="#d0d0d0"/><path d="M422.9 386.5h3.2v9.5h2.3l-3.9 6.5l-3.9 -6.5h2.3z" fill="#d8d8d8"/><text x="358" y="10.5" font-family="Liberation Sans" font-size="5.5" fill="#3a3a3a">(c) 2021, iCanLens</text><circle cx="14.5" cy="15.5" r="8.6" fill="#13131a"/><path d="M7.9 15.5H21.1M14.5 8.9V22.1" stroke="#000" stroke-width="1.2"/><circle cx="433.5" cy="15.5" r="8.6" fill="#13131a"/><path d="M426.9 15.5H440.1M433.5 8.9V22.1" stroke="#000" stroke-width="1.2"/><circle cx="65" cy="434" r="8.7" fill="#13131a"/><path d="M58.3 434H71.7M65 427.3V440.7" stroke="#000" stroke-width="1.2"/><circle cx="382" cy="434" r="8.7" fill="#13131a"/><path d="M375.3 434H388.7M382 427.3V440.7" stroke="#000" stroke-width="1.2"/><path d="M32.5 446V422Q32.5 416 26 416H7.5Q2 416 2 422V434Q2 446 14 446" fill="#1f1f1f" stroke="#111" stroke-width="1.3"/><path d="M415.5 446V422Q415.5 416 422 416H440.5Q446 416 446 422V434Q446 446 434 446" fill="#1f1f1f" stroke="#111" stroke-width="1.3"/><circle cx="16" cy="432" r="11.5" fill="#13131a"/><path d="M4.5 432L27.5 432" stroke="#000" stroke-width="1.3" transform="rotate(-15 16 432)"/><circle cx="432" cy="431" r="11.5" fill="#13131a"/><path d="M420.5 431L443.5 431" stroke="#000" stroke-width="1.3" transform="rotate(25 432 431)"/></g></defs><use href="#bez"/><path d="M70 52.5L105 52.5" stroke="#ffff00" stroke-width="2.2" fill="none"/><path d="M133 52.5L158 52.5" stroke="#ffff00" stroke-width="2.2" fill="none"/><path d="M186 52.5L206 52.5" stroke="#ffff00" stroke-width="2.2" fill="none"/><path d="M242 52.5L258 52.5" stroke="#ffff00" stroke-width="2.2" fill="none"/><path d="M295 52.5L310 52.5" stroke="#ffff00" stroke-width="2.2" fill="none"/><path d="M348 52.5L378 52.5" stroke="#ffff00" stroke-width="2.2" fill="none"/><text transform="translate(105 68.5) scale(1.03 1.2)" font-family="Liberation Mono" font-size="15" fill="#ffff00" text-anchor="start" stroke="#ffff00" stroke-width="0.1">CRM</text><text transform="translate(156 68.5) scale(1.03 1.2)" font-family="Liberation Mono" font-size="15" fill="#ffff00" text-anchor="start" stroke="#ffff00" stroke-width="0.1">RWS</text><text transform="translate(204 68.5) scale(1.03 1.2)" font-family="Liberation Mono" font-size="15" fill="#ffff00" text-anchor="start" stroke="#ffff00" stroke-width="0.1">NORM</text><text transform="translate(257 68.5) scale(1.03 1.2)" font-family="Liberation Mono" font-size="15" fill="#ffff00" text-anchor="start" stroke="#ffff00" stroke-width="0.1">OVRD</text><text transform="translate(309 68.5) scale(1.03 1.2)" font-family="Liberation Mono" font-size="15" fill="#ffff00" text-anchor="start" stroke="#ffff00" stroke-width="0.1">CNTL</text><path d="M52.5 71L52.5 134.5" stroke="#ffff00" stroke-width="2.2" fill="none"/><path d="M52.5 156L52.5 203" stroke="#ffff00" stroke-width="2.2" fill="none"/><path d="M74 75H64V111H74" stroke="#e8e8e8" stroke-width="1.5" fill="none"/><path d="M68 90L65 93L68 96" stroke="#e8e8e8" stroke-width="1.2" fill="none"/><path d="M53 124L61 116L69 124Z" stroke="#ffff00" stroke-width="2" fill="none"/><path d="M53 166L61 174L69 166Z" stroke="#ffff00" stroke-width="2" fill="none"/><text transform="translate(52 151) scale(1.03 1.2)" font-family="Liberation Mono" font-size="15" fill="#ffff00" text-anchor="start" stroke="#ffff00" stroke-width="0.1">40</text><path d="M76 139L83 139" stroke="#0a9cff" stroke-width="2" fill="none"/><path d="M76 167L83 167" stroke="#0a9cff" stroke-width="2" fill="none"/><path d="M76 195L83 195" stroke="#0a9cff" stroke-width="2" fill="none"/><path d="M76 252L83 252" stroke="#0a9cff" stroke-width="2" fill="none"/><path d="M76 280L83 280" stroke="#0a9cff" stroke-width="2" fill="none"/><text transform="translate(52 220) scale(1.03 1.2)" font-family="Liberation Mono" font-size="15" fill="#ffff00" text-anchor="start" stroke="#ffff00" stroke-width="0.1">A</text><text transform="translate(52 242) scale(1.03 1.2)" font-family="Liberation Mono" font-size="15" fill="#ffff00" text-anchor="start" stroke="#ffff00" stroke-width="0.1">6</text><path d="M52 246L52 256" stroke="#ffff00" stroke-width="2.2" fill="none"/><text transform="translate(52 272) scale(1.03 1.2)" font-family="Liberation Mono" font-size="15" fill="#ffff00" text-anchor="start" stroke="#ffff00" stroke-width="0.1">4</text><text transform="translate(52 293) scale(1.03 1.2)" font-family="Liberation Mono" font-size="15" fill="#ffff00" text-anchor="start" stroke="#ffff00" stroke-width="0.1">B</text><text transform="translate(52 308) scale(0.87 1.2)" font-family="Liberation Mono" font-size="15" fill="#0a9cff" text-anchor="start" stroke="#0a9cff" stroke-width="0.1">317_11</text><text transform="translate(52 323) scale(1.03 1.2)" font-family="Liberation Mono" font-size="15" fill="#ffff00" text-anchor="start" stroke="#ffff00" stroke-width="0.1">M+</text><path d="M64 227L89 227" stroke="#0a9cff" stroke-width="3" fill="none"/><path d="M75.5 220L75.5 234" stroke="#0a9cff" stroke-width="3" fill="none"/><circle cx="74.69999999999999" cy="359" r="11" stroke="#0a9cff" stroke-width="2" fill="none"/><path d="M80 348L86 345L85 352Z" fill="#0a9cff"/><text transform="translate(74.69999999999999 364) scale(1.03 1.2)" font-family="Liberation Mono" font-size="11" fill="#0a9cff" text-anchor="middle" stroke="#0a9cff" stroke-width="0.1">14</text><text transform="translate(63 387) scale(0.85 1.2)" font-family="Liberation Mono" font-size="15" fill="#0a9cff" text-anchor="start" stroke="#0a9cff" stroke-width="0.1">213</text><path d="M70 395L101 395" stroke="#ffff00" stroke-width="2.2" fill="none"/><path d="M138 395L151 395" stroke="#ffff00" stroke-width="2.2" fill="none"/><path d="M298 395L311 395" stroke="#ffff00" stroke-width="2.2" fill="none"/><path d="M347 395L378 395" stroke="#ffff00" stroke-width="2.2" fill="none"/><text transform="translate(100 393) scale(1.03 1.2)" font-family="Liberation Mono" font-size="15" fill="#ffff00" text-anchor="start" stroke="#ffff00" stroke-width="0.1">SWAP</text><rect x="154" y="379" width="38" height="17" fill="#ffff00"/><text x="173" y="393" font-family="Liberation Sans" font-weight="bold" font-size="15" fill="#000" text-anchor="middle">FCR</text><text transform="translate(309 394) scale(1.03 1.2)" font-family="Liberation Mono" font-size="15" fill="#ffff00" text-anchor="start" stroke="#ffff00" stroke-width="0.1">DCLT</text><path d="M367 372L377 380L367 388M377 380H385" stroke="#ffff00" stroke-width="2.2" fill="none"/><path d="M136.6 363.5L136.6 370.5" stroke="#0a9cff" stroke-width="2.2" fill="none"/><path d="M165.5 363.5L165.5 370.5" stroke="#0a9cff" stroke-width="2.2" fill="none"/><path d="M194.3 363.5L194.3 370.5" stroke="#0a9cff" stroke-width="2.2" fill="none"/><path d="M223.7 358.5L223.7 370.5" stroke="#0a9cff" stroke-width="2.2" fill="none"/><path d="M253 363.5L253 370.5" stroke="#0a9cff" stroke-width="2.2" fill="none"/><path d="M282 363.5L282 370.5" stroke="#0a9cff" stroke-width="2.2" fill="none"/><path d="M311.5 363.5L311.5 370.5" stroke="#0a9cff" stroke-width="2.2" fill="none"/><path d="M396 71L396 107" stroke="#ffff00" stroke-width="2.2" fill="none"/><path d="M396 129L396 177" stroke="#ffff00" stroke-width="2.2" fill="none"/><path d="M396 187L396 226" stroke="#ffff00" stroke-width="2.2" fill="none"/><path d="M396 241L396 276" stroke="#ffff00" stroke-width="2.2" fill="none"/><path d="M396 292L396 329" stroke="#ffff00" stroke-width="2.2" fill="none"/><path d="M396 345L396 375" stroke="#ffff00" stroke-width="2.2" fill="none"/><text transform="translate(358 126) scale(1.03 1.2)" font-family="Liberation Mono" font-size="15" fill="#ffff00" text-anchor="start" stroke="#ffff00" stroke-width="0.1">ASGN</text><path d="M375 136L399 136" stroke="#eeeeee" stroke-width="2.2" fill="none"/><path d="M375 224L399 224" stroke="#eeeeee" stroke-width="2.2" fill="none"/><path d="M375 311L399 311" stroke="#eeeeee" stroke-width="2.2" fill="none"/><text transform="translate(389 185.5) scale(1.03 1.2)" font-family="Liberation Mono" font-size="11" fill="#ffff00" text-anchor="start" stroke="#ffff00" stroke-width="0.1">1</text><text transform="translate(389 239) scale(1.03 1.2)" font-family="Liberation Mono" font-size="11" fill="#ffff00" text-anchor="start" stroke="#ffff00" stroke-width="0.1">2</text><text transform="translate(389 291) scale(1.03 1.2)" font-family="Liberation Mono" font-size="11" fill="#ffff00" text-anchor="start" stroke="#ffff00" stroke-width="0.1">3</text><text transform="translate(389 343) scale(1.03 1.2)" font-family="Liberation Mono" font-size="11" fill="#ffff00" text-anchor="start" stroke="#ffff00" stroke-width="0.1">4</text><path d="M134 247V239L204 229" stroke="#ff00ff" stroke-width="1.7" fill="none"/><path d="M244 223L314 213V220" stroke="#ff00ff" stroke-width="1.7" fill="none"/><path d="M216 215L216 233" stroke="#e0e0e0" stroke-width="1.8" fill="none"/><path d="M232 215L232 233" stroke="#e0e0e0" stroke-width="1.8" fill="none"/><text transform="translate(235 217) scale(1.03 1.2)" font-family="Liberation Mono" font-size="12" fill="#eeeeee" text-anchor="start" stroke="#eeeeee" stroke-width="0.1">22</text><text transform="translate(235 246) scale(1.03 1.2)" font-family="Liberation Mono" font-size="12" fill="#e02020" text-anchor="start" stroke="#e02020" stroke-width="0.1">-01</text><circle cx="320" cy="276" r="8.5" stroke="#0a9cff" stroke-width="1.8" fill="none"/><circle cx="320" cy="276" r="4.8" stroke="#0a9cff" stroke-width="1.6" fill="none"/><circle cx="320" cy="276" r="1.6" fill="#0a9cff"/></svg><svg class="abs" style="left:1161px;top:191px" width="448" height="448" viewBox="0 0 448 448"><use href="#bez"/><text transform="translate(105 68) scale(1.03 1.2)" font-family="Liberation Mono" font-size="15" fill="#ffff00" text-anchor="start" stroke="#ffff00" stroke-width="0.1">AAM</text><text transform="translate(263 68) scale(1.03 1.2)" font-family="Liberation Mono" font-size="15" fill="#ffff00" text-anchor="start" stroke="#ffff00" stroke-width="0.1">INV</text><text transform="translate(309 68) scale(1.03 1.2)" font-family="Liberation Mono" font-size="15" fill="#ffff00" text-anchor="start" stroke="#ffff00" stroke-width="0.1">CNTL</text><text transform="translate(329 125) scale(1.03 1.2)" font-family="Liberation Mono" font-size="15" fill="#ffff00" text-anchor="start" stroke="#ffff00" stroke-width="0.1">2 A120B</text><text transform="translate(52 177) scale(1.03 1.2)" font-family="Liberation Mono" font-size="15" fill="#ffff00" text-anchor="start" stroke="#ffff00" stroke-width="0.1">SLAV</text><text transform="translate(52 230) scale(1.03 1.2)" font-family="Liberation Mono" font-size="15" fill="#ffff00" text-anchor="start" stroke="#ffff00" stroke-width="0.1">UNKN</text><rect x="49" y="327.5" width="11.5" height="21" fill="#ffff00"/><text x="54.700000000000045" y="345" font-family="Liberation Sans" font-weight="bold" font-size="14" fill="#000" text-anchor="middle">1</text><text transform="translate(70 346) scale(1.03 1.2)" font-family="Liberation Mono" font-size="15" fill="#ffff00" text-anchor="start" stroke="#ffff00" stroke-width="0.1">M</text><text transform="translate(366 346) scale(1.03 1.2)" font-family="Liberation Mono" font-size="15" fill="#ffff00" text-anchor="start" stroke="#ffff00" stroke-width="0.1">M 9</text><text transform="translate(99 393) scale(1.03 1.2)" font-family="Liberation Mono" font-size="15" fill="#ffff00" text-anchor="start" stroke="#ffff00" stroke-width="0.1">SWAP</text><text transform="translate(312 393) scale(1.03 1.2)" font-family="Liberation Mono" font-size="15" fill="#ffff00" text-anchor="start" stroke="#ffff00" stroke-width="0.1">S-J</text><rect x="153" y="379" width="41" height="17" fill="#ffff00"/><text x="173.5" y="393" font-family="Liberation Sans" font-weight="bold" font-size="14" fill="#000" text-anchor="middle">SMS</text><path d="M65.5 363.20000000000005H75L79 372.5L83.5 363L87 372.5L90 363.20000000000005H99.29999999999995M83.5 347.6V386.6" stroke="#0a9cff" stroke-width="1.5" fill="none"/></svg>
<div class="abs" style="left:665.7px;top:171.10px;font-size:15px;line-height:18.0px;color:#000;white-space:nowrap;font-weight:bold;">MFD 1</div><div class="abs" style="left:965.7px;top:171.10px;font-size:15px;line-height:18.0px;color:#000;white-space:nowrap;font-weight:bold;">MFD 2</div><div class="abs" style="left:759px;top:668px;width:13px;height:13px;background:#fff;border-top:1px solid #a0a0a0;border-left:1px solid #a0a0a0;border-right:1px solid #e3e3e3;border-bottom:1px solid #e3e3e3"></div><svg class="abs" style="left:760px;top:669px" width="11" height="11"><path d="M2.5 5L4.7 7.5L9 2.5" stroke="#000" stroke-width="2" fill="none"/></svg><div class="abs" style="left:781px;top:664.59px;font-size:16.6px;line-height:19.92px;color:#000;white-space:nowrap;font-weight:bold;">Bullseye on MFD</div><div class="abs" style="left:959px;top:661.75px;font-size:14px;line-height:16.8px;color:#ff0000;white-space:nowrap;font-weight:bold;transform:scaleX(0.941);transform-origin:0 0;-webkit-text-stroke:0.2px #f00;">Veuillez inscrire cette valeur pour corriger une erreur du programmeur!</div><div class="abs" style="left:201px;top:694px;width:367px;height:92px;border:1px solid #8a8650;box-shadow:inset 1px 1px 0 #e8e4b0, 1px 1px 0 #e8e4b0"></div><div class="abs" style="left:210px;top:690px;width:220px;height:10px;background:#bdb76b"></div><div class="abs" style="left:213.5px;top:686.31px;font-size:17px;line-height:20.4px;color:#111;white-space:nowrap;font-weight:bold;">Préférences personnelles</div><div class="btn" style="left:214px;top:722px;width:163px;height:39px"></div><svg class="abs" style="left:219px;top:727px" width="30" height="30"><circle cx="15" cy="15" r="15" fill="#000"/><path d="M15 3.5V16M9.5 10.5L15 16L20.5 10.5" stroke="#f0e68c" stroke-width="2.2" fill="none"/><path d="M8.2 18.3V21.8H21.8V18.3" stroke="#f0e68c" stroke-width="2.2" fill="none"/></svg><div class="abs" style="left:263.6px;top:731.51px;font-size:17px;line-height:20.4px;color:#000;white-space:nowrap;font-weight:bold;">Charger</div><div class="btn" style="left:392px;top:722px;width:163px;height:39px"></div><svg class="abs" style="left:397px;top:728px" width="27" height="29"><path fill-rule="evenodd" d="M0 0H6V9H21V0H25L26 1V28H0Z M3 12V25H23V12Z" fill="#000"/><rect x="15.3" y="0" width="3" height="7" fill="#000"/><rect x="3" y="24" width="20" height="1.5" fill="#444"/></svg><div class="abs" style="left:429px;top:731.51px;font-size:17px;line-height:20.4px;color:#000;white-space:nowrap;font-weight:bold;">Enregistrer</div><div class="btn2" style="left:603px;top:686px;width:294px;height:54px;border-top:1px solid #000;border-left:1px solid #000;box-shadow:inset 1px 1px 0 #e8e4c0"></div><div class="abs" style="left:759px;top:686px;width:136px;height:1px;background:#bdb76b"></div><svg class="abs" style="left:606px;top:697px" width="28" height="34"><path d="M5 27.5H3.2Q2.5 27.5 2.5 26.8V3.2Q2.5 2.5 3.2 2.5H16.5L24.5 10.5V26.8Q24.5 27.5 23.8 27.5H14" stroke="#000" stroke-width="2.6" fill="none"/><path d="M16 2L25 11H16Z" fill="#000"/><path d="M6.5 8.5H14M6.5 12H20M6.5 15.3H20" stroke="#000" stroke-width="1.7"/><circle cx="10.5" cy="21.5" r="3.6" stroke="#000" stroke-width="2" fill="none"/><path d="M8 24.5V31.5L10.5 29.5L13 31.5V24.5Z" fill="#000"/></svg><div class="abs" style="left:644px;top:702.22px;font-size:17.2px;line-height:20.64px;color:#000;white-space:nowrap;font-weight:bold;">Standard 101e ECV [MFD]</div><div class="btn2" style="left:605px;top:746px;width:292px;height:41px"></div><svg class="abs" style="left:608px;top:751px" width="36" height="34"><path d="M28.2 8.3A13.5 13.5 0 1 0 15.8 29.2" stroke="#000" stroke-width="2.5" fill="none"/><circle cx="21.6" cy="28.5" r="1.4" fill="#000"/><circle cx="26.5" cy="25.3" r="1.4" fill="#000"/><circle cx="29.5" cy="20.9" r="1.4" fill="#000"/><path d="M24.5 8.3L33.5 8.3L29 16Z" fill="#000"/><rect x="14" y="11.5" width="6" height="9" stroke="#000" stroke-width="2.3" fill="none"/></svg><div class="abs" style="left:677px;top:755.69px;font-size:16.7px;line-height:20.04px;color:#000;white-space:nowrap;font-weight:bold;">Réinitialiser à zéro</div><div class="btn2" style="left:938px;top:707px;width:268px;height:80px"></div><svg class="abs" style="left:943px;top:733px" width="27" height="29"><path fill-rule="evenodd" d="M0 0H6V9H21V0H25L26 1V28H0Z M3 12V25H23V12Z" fill="#000"/><rect x="15.3" y="0" width="3" height="7" fill="#000"/><rect x="3" y="24" width="20" height="1.5" fill="#444"/></svg><div class="abs" style="left:770.5999999999999px;width:600px;text-align:center;top:730.13px;font-size:15.5px;line-height:18.6px;color:#000;white-space:nowrap;font-weight:bold;">Enregistrer à la DTC</div><div class="abs" style="left:770.5999999999999px;width:600px;text-align:center;top:747.13px;font-size:15.5px;line-height:18.6px;color:#000;white-space:nowrap;font-weight:bold;">(Spyder.ini)</div><div class="abs" style="left:1096.8px;width:600px;text-align:center;top:686.61px;font-size:14.15px;line-height:16.98px;color:#000;white-space:nowrap;">Note: Pour exporter l'image de vos MFD sur un écran externe,</div><div class="abs" style="left:1096.8px;width:600px;text-align:center;top:705.91px;font-size:14.15px;line-height:16.98px;color:#000;white-space:nowrap;">voir l'onglet «Config», option MISC / Export RTT Textures.</div>
<div class="abs" style="left:28.6px;top:835.26px;font-size:12.4px;line-height:14.88px;color:#111;white-space:nowrap;transform:scaleX(0.85);transform-origin:0 0;">.NET Framework 4.8.</div>
<div class="abs" style="left:1536px;top:822px;width:127px;height:27px;background:#f0f0f0;border-top:1px solid #fff;border-left:1px solid #fff;border-right:2px solid #000;border-bottom:2px solid #000;box-shadow:inset 0 -1px 0 #fff"></div>
<div class="abs" style="left:1299.4px;width:600px;text-align:center;top:829.26px;font-size:12.4px;line-height:14.88px;color:#000;white-space:nowrap;transform:scaleX(0.85);transform-origin:50% 0;">Quitter</div>
<svg class="abs" style="left:0;top:0" width="1683" height="866">
<ellipse cx="216.7" cy="16.2" rx="48.5" ry="13.6" stroke="#ff0000" stroke-width="3.6" fill="none"/>
<ellipse cx="1003.7" cy="138.5" rx="28.3" ry="28.2" stroke="#ff0000" stroke-width="4" fill="none"/>
<ellipse cx="603.3" cy="634.5" rx="50" ry="29" stroke="#ff0000" stroke-width="4" fill="none" transform="rotate(2 603 634)"/>
<ellipse cx="907" cy="634" rx="50" ry="28.8" stroke="#ff0000" stroke-width="4" fill="none" transform="rotate(2 906 634)"/>
<path d="M955 669L928 651" stroke="#ff0000" stroke-width="3.2" stroke-linecap="round"/>
<path d="M915.3 644.2L935.8 648.4L927.8 658Z" fill="#ff0000"/>
</svg>
</body></html>
